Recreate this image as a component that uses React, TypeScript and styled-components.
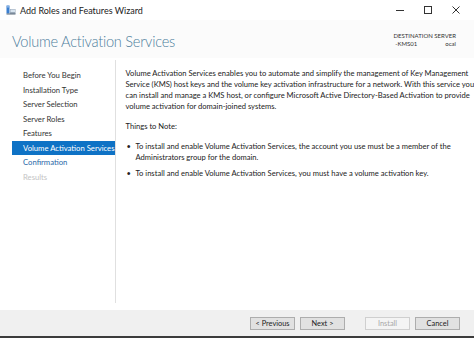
import styled, { createGlobalStyle } from 'styled-components'

const GlobalStyle = createGlobalStyle`
    html, body {
        margin: 0;
        padding: 0;
        background: #ffffff;
    }
    body {
        font-family: Lato, "Noto Sans", sans-serif;
    }
`

const Window = styled.div`
    width: 474px;
    height: 338px;
    display: flex;
    flex-direction: column;
    background: #ffffff;
    overflow: hidden;
`

const TitleBar = styled.div`
    height: 20px;
    display: flex;
    align-items: center;
    padding-left: 6px;
    background: #ffffff;
`

const TitleText = styled.span`
    font-size: 9px;
    color: #222;
    margin-left: 4px;
`

const Controls = styled.div`
    margin-left: auto;
    display: flex;
    height: 100%;
    padding-right: 4px;
`

const ControlButton = styled.div`
    width: 28px;
    height: 100%;
    display: flex;
    align-items: center;
    justify-content: center;
    color: #333;
`

const Header = styled.div`
    height: 38px;
    display: flex;
    align-items: flex-start;
    padding: 0 18px 0 12px;
    background: #fbfbfb;
`

const PageTitle = styled.h1`
    margin: 13px 0 0 0;
    font-size: 14.6px;
    font-weight: 300;
    letter-spacing: -0.25px;
    color: #4d7d9c;
`

const Destination = styled.div`
    margin-left: auto;
    margin-top: 12px;
    text-align: right;
    font-size: 6px;
    line-height: 8px;
    color: #333;
`

const ServerName = styled.div`
    display: flex;
    gap: 28px;
    justify-content: flex-end;
`

const Body = styled.div`
    flex: 1;
    display: flex;
    background: #ffffff;
    min-height: 0;
`

const Nav = styled.div`
    width: 105px;
    padding: 8px 0 0 12px;
    display: flex;
    flex-direction: column;
    border-right: 1px solid #e0e0e0;
    margin: 2px 0 7px 0;
`

const NavItem = styled.div<{ $state?: 'active' | 'next' | 'disabled' }>`
    height: 14.5px;
    line-height: 14.5px;
    font-size: 7.7px;
    padding-left: 11px;
    white-space: nowrap;
    background: ${p => (p.$state === 'active' ? '#0e72c5' : 'transparent')};
    color: ${p =>
        p.$state === 'active'
            ? '#ffffff'
            : p.$state === 'next'
            ? '#2767a8'
            : p.$state === 'disabled'
            ? '#c4c4c4'
            : '#333333'};
`

const Content = styled.div`
    flex: 1;
    padding: 10px 4px 0 10px;
    font-size: 7.6px;
    line-height: 11px;
    color: #222;
    white-space: nowrap;
`

const Para = styled.p`
    margin: 0 0 9px 0;
`

const List = styled.ul`
    margin: 0;
    padding: 0;
    list-style: none;
`

const ListItem = styled.li`
    position: relative;
    padding-left: 10px;
    margin-bottom: 5px;

    &::before {
        content: '•';
        position: absolute;
        left: 1px;
        top: 0;
    }
`

const Footer = styled.div`
    height: 26px;
    background: #f0f0f0;
    display: flex;
    align-items: center;
    justify-content: flex-end;
    padding-right: 14px;
    gap: 5px;
`

const Button = styled.button<{ $gapBefore?: boolean }>`
    width: 45px;
    height: 13px;
    padding: 0;
    font-family: inherit;
    font-size: 7.4px;
    line-height: 11px;
    border: 1px solid ${p => (p.disabled ? '#cfcfcf' : '#adadad')};
    background: ${p => (p.disabled ? '#f4f4f4' : '#e1e1e1')};
    color: ${p => (p.disabled ? '#a8a8a8' : '#222')};
    margin-left: ${p => (p.$gapBefore ? '15px' : '0')};
`

const BottomEdge = styled.div`
    height: 2px;
    background: #3c3c3c;
`

const WizardIcon = () => (
    <svg width="10" height="10" viewBox="0 0 10 10">
        <rect x="0.5" y="0.5" width="3" height="8" fill="#3a7fd0" />
        <rect x="1" y="1.5" width="2" height="0.8" fill="#cfe3f7" />
        <rect x="4" y="4" width="5.5" height="5" fill="#9aa9b8" />
        <rect x="4.5" y="4.5" width="4.5" height="2.5" fill="#d8e4ef" />
        <rect x="0.5" y="8.5" width="9" height="1" fill="#5b6b7b" />
    </svg>
)

export default function App() {
    return (
        <>
            <GlobalStyle />
            <Window>
                <TitleBar>
                    <WizardIcon />
                    <TitleText>Add Roles and Features Wizard</TitleText>
                    <Controls>
                        <ControlButton>
                            <svg width="10" height="10" viewBox="0 0 10 10">
                                <line x1="1" y1="5.5" x2="9" y2="5.5" stroke="#333" strokeWidth="1" />
                            </svg>
                        </ControlButton>
                        <ControlButton>
                            <svg width="10" height="10" viewBox="0 0 10 10">
                                <rect x="1.5" y="1.5" width="7" height="7" fill="none" stroke="#333" strokeWidth="1" />
                            </svg>
                        </ControlButton>
                        <ControlButton>
                            <svg width="10" height="10" viewBox="0 0 10 10">
                                <path d="M1.5 1.5 L8.5 8.5 M8.5 1.5 L1.5 8.5" stroke="#333" strokeWidth="1" />
                            </svg>
                        </ControlButton>
                    </Controls>
                </TitleBar>
                <Header>
                    <PageTitle>Volume Activation Services</PageTitle>
                    <Destination>
                        <div>DESTINATION SERVER</div>
                        <ServerName>
                            <span>-KMS01</span>
                            <span>ocal</span>
                        </ServerName>
                    </Destination>
                </Header>
                <Body>
                    <Nav>
                        <NavItem>Before You Begin</NavItem>
                        <NavItem>Installation Type</NavItem>
                        <NavItem>Server Selection</NavItem>
                        <NavItem>Server Roles</NavItem>
                        <NavItem>Features</NavItem>
                        <NavItem $state="active">Volume Activation Services</NavItem>
                        <NavItem $state="next">Confirmation</NavItem>
                        <NavItem $state="disabled">Results</NavItem>
                    </Nav>
                    <Content>
                        <Para>
                            Volume Activation Services enables you to automate and simplify the management of Key Management
                            <br />
                            Service (KMS) host keys and the volume key activation infrastructure for a network. With this service you
                            <br />
                            can install and manage a KMS host, or configure Microsoft Active Directory-Based Activation to provide
                            <br />
                            volume activation for domain-joined systems.
                        </Para>
                        <Para>Things to Note:</Para>
                        <List>
                            <ListItem>
                                To install and enable Volume Activation Services, the account you use must be a member of the
                                <br />
                                Administrators group for the domain.
                            </ListItem>
                            <ListItem>
                                To install and enable Volume Activation Services, you must have a volume activation key.
                            </ListItem>
                        </List>
                    </Content>
                </Body>
                <Footer>
                    <Button>&lt; Previous</Button>
                    <Button>Next &gt;</Button>
                    <Button disabled $gapBefore>Install</Button>
                    <Button>Cancel</Button>
                </Footer>
                <BottomEdge />
            </Window>
        </>
    )
}
